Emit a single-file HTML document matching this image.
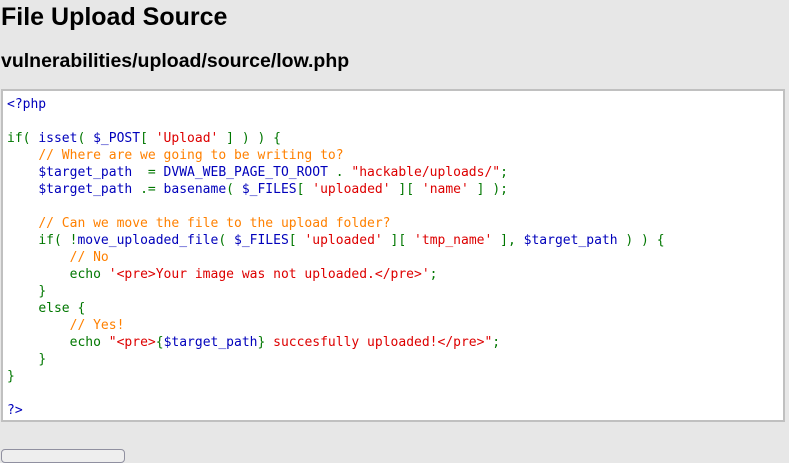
<!DOCTYPE html>
<html><head><meta charset="utf-8"><style>
body{margin:0;background:#e7e7e7;font-family:"Liberation Sans",sans-serif;width:789px;height:456px;overflow:hidden;position:relative}
h1{position:absolute;left:1px;top:3px;margin:0;font-size:25px;font-weight:bold;color:#000}
h2{position:absolute;left:1px;top:50px;margin:0;font-size:19.5px;font-weight:bold;color:#000}
.box{position:absolute;left:1px;top:89px;width:780px;height:329px;background:#fff;border:2px solid #c0c0c0}
pre{margin:0;position:absolute;left:4px;top:5px;font-family:"DejaVu Sans Mono",monospace;font-size:13px;line-height:17px;color:#000}
pre div{height:17px;white-space:pre}
.g{color:#007700}.b{color:#0000BB}.r{color:#DD0000}.o{color:#FF8000}
.btn{position:absolute;left:1px;top:449px;width:122px;height:12px;border:1px solid #9090a0;border-radius:4px;background:#eee}
</style></head><body>
<h1>File Upload Source</h1>
<h2>vulnerabilities/upload/source/low.php</h2>
<div class="box"><pre><div><span class="b">&lt;?php</span></div><div> </div><div><span class="g">if( </span><span class="b">isset</span><span class="g">( </span><span class="b">$_POST</span><span class="g">[ </span><span class="r">'Upload'</span><span class="g"> ] ) ) {</span></div><div>    <span class="o">// Where are we going to be writing to?</span></div><div>    <span class="b">$target_path  </span><span class="g">= </span><span class="b">DVWA_WEB_PAGE_TO_ROOT </span><span class="g">. </span><span class="r">"hackable/uploads/"</span><span class="g">;</span></div><div>    <span class="b">$target_path </span><span class="g">.= </span><span class="b">basename</span><span class="g">( </span><span class="b">$_FILES</span><span class="g">[ </span><span class="r">'uploaded'</span><span class="g"> ][ </span><span class="r">'name'</span><span class="g"> ] );</span></div><div> </div><div>    <span class="o">// Can we move the file to the upload folder?</span></div><div>    <span class="g">if( !</span><span class="b">move_uploaded_file</span><span class="g">( </span><span class="b">$_FILES</span><span class="g">[ </span><span class="r">'uploaded'</span><span class="g"> ][ </span><span class="r">'tmp_name'</span><span class="g"> ], </span><span class="b">$target_path </span><span class="g">) ) {</span></div><div>        <span class="o">// No</span></div><div>        <span class="g">echo </span><span class="r">'&lt;pre&gt;Your image was not uploaded.&lt;/pre&gt;'</span><span class="g">;</span></div><div>    <span class="g">}</span></div><div>    <span class="g">else {</span></div><div>        <span class="o">// Yes!</span></div><div>        <span class="g">echo </span><span class="r">"&lt;pre&gt;</span><span class="g">{</span><span class="b">$target_path</span><span class="g">}</span><span class="r"> succesfully uploaded!&lt;/pre&gt;"</span><span class="g">;</span></div><div>    <span class="g">}</span></div><div><span class="g">}</span></div><div> </div><div><span class="b">?&gt;</span></div></pre></div>
<div class="btn"></div>
</body></html>
